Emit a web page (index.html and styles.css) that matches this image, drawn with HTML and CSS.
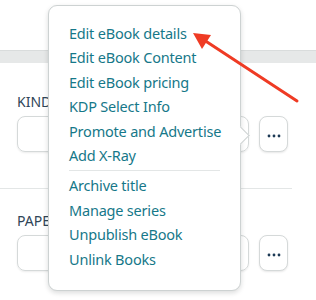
FILE: index.html
```html
<!DOCTYPE html>
<html lang="en">
  <head>
    <meta charset="UTF-8" />
    <meta name="viewport" content="width=device-width, initial-scale=1.0" />
    <title>Bookshelf actions</title>

    <link rel="stylesheet" href="styles.css">
  </head>

  <body>
    <div class="page">
      <div class="top-space"></div>
      <div class="band"></div>

      <div class="format first">
        <div class="format-label">KINDLE EBOOK</div>
        <div class="format-row">
          <div class="status-box"></div>
          <button class="more-btn" aria-label="More actions">
            <svg width="14" height="4" viewBox="0 0 14 4">
              <circle cx="2" cy="2" r="1.4" />
              <circle cx="7" cy="2" r="1.4" />
              <circle cx="12" cy="2" r="1.4" />
            </svg>
          </button>
        </div>
      </div>

      <div class="format second">
        <div class="format-label">PAPERBACK</div>
        <div class="format-row">
          <div class="status-box"></div>
          <button class="more-btn" aria-label="More actions">
            <svg width="14" height="4" viewBox="0 0 14 4">
              <circle cx="2" cy="2" r="1.4" />
              <circle cx="7" cy="2" r="1.4" />
              <circle cx="12" cy="2" r="1.4" />
            </svg>
          </button>
        </div>
      </div>
    </div>

    <!-- popover menu opened from the ebook row -->
    <div class="action-menu">
      <ul class="menu-list">
        <li><a href="#">Edit eBook details</a></li>
        <li><a href="#">Edit eBook Content</a></li>
        <li><a href="#">Edit eBook pricing</a></li>
        <li><a href="#">KDP Select Info</a></li>
        <li><a href="#">Promote and Advertise</a></li>
        <li><a href="#">Add X-Ray</a></li>
        <li class="menu-divider"></li>
        <li><a href="#">Archive title</a></li>
        <li><a href="#">Manage series</a></li>
        <li><a href="#">Unpublish eBook</a></li>
        <li><a href="#">Unlink Books</a></li>
      </ul>
    </div>

    <!-- annotation arrow -->
    <svg class="annotation" width="316" height="300" viewBox="0 0 316 300">
      <line x1="297" y1="101" x2="204" y2="40" stroke="#ef3b24" stroke-width="3" stroke-linecap="round" />
      <polygon points="193,33 211,35 202,49" fill="#ef3b24" />
    </svg>
  </body>
</html>
```

FILE: styles.css
```css
body {
  margin: 0;
  width: 316px;
  height: 300px;
  overflow: hidden;
  background-color: #ffffff;
  font-family: "Noto Sans", "Open Sans", sans-serif;
  position: relative;
}

.page {
  width: 316px;
}

.top-space {
  height: 50px;
}

.band {
  height: 12px;
  background-color: #e6e8e8;
  border-top: 1px solid #d9dcdc;
}

.format {
  width: 292px;
  padding: 30px 4px 36px 17px;
  box-sizing: border-box;
}

.format.first {
  border-bottom: 1px solid #e3e6e6;
}

.format.second {
  padding-top: 23px;
}

.format-label {
  font-size: 14px;
  line-height: 17px;
  color: #2f4558;
  margin-bottom: 6px;
  white-space: nowrap;
}

.format-row {
  display: flex;
  gap: 10px;
}

.status-box {
  width: 232px;
  height: 36px;
  border: 1px solid #d5d9d9;
  border-radius: 8px;
  box-sizing: border-box;
  box-shadow: 0 1px 2px rgba(15, 17, 17, 0.08);
}

.more-btn {
  width: 29px;
  height: 36px;
  padding: 0;
  border: 1px solid #d5d9d9;
  border-radius: 8px;
  background-color: #ffffff;
  box-shadow: 0 1px 2px rgba(15, 17, 17, 0.1);
  display: flex;
  align-items: center;
  justify-content: center;
  padding-top: 4px;
}

.more-btn svg {
  fill: #1d3a55;
}

.action-menu {
  position: absolute;
  left: 48px;
  top: 5px;
  width: 193px;
  height: 286px;
  box-sizing: border-box;
  background-color: #ffffff;
  border: 1px solid #cdd2d2;
  border-radius: 9px;
  box-shadow: 0 2px 5px rgba(15, 17, 17, 0.15);
  padding: 15px 20px 0 20px;
}

/* caret pointing at the ... button */
.action-menu::after {
  content: "";
  position: absolute;
  right: -7px;
  top: 123px;
  width: 12px;
  height: 12px;
  background-color: #ffffff;
  border-top: 1px solid #cdd2d2;
  border-right: 1px solid #cdd2d2;
  transform: rotate(45deg);
}

.menu-list {
  list-style: none;
  margin: 0;
  padding: 0;
}

.menu-list a {
  display: block;
  font-size: 14.5px;
  line-height: 24.4px;
  letter-spacing: -0.2px;
  color: #167889;
  text-decoration: none;
  white-space: nowrap;
}

.menu-divider {
  height: 1px;
  background-color: #e3e6e6;
  margin: 3px 0 2px 0;
}

.annotation {
  position: absolute;
  left: 0;
  top: 0;
  pointer-events: none;
}
```
